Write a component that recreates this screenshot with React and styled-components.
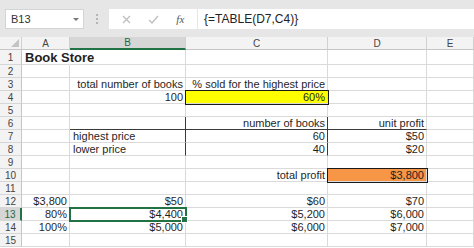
import React from "react"
import styled, { createGlobalStyle, css } from "styled-components"

const GlobalStyle = createGlobalStyle`
  html, body {
    margin: 0;
    padding: 0;
    background: #fff;
  }
  body {
    font-family: "Liberation Sans", Arial, sans-serif;
  }
`

const Window = styled.div`
  width: 474px;
  height: 248px;
  overflow: hidden;
  display: flex;
  flex-direction: column;
  background: #fff;
`

const FormulaArea = styled.div`
  height: 37px;
  box-sizing: border-box;
  padding-top: 9px;
  background: #e6e6e6;
  display: flex;
  align-items: flex-start;
`

const NameBox = styled.div`
  margin-left: 5px;
  width: 79px;
  height: 20px;
  box-sizing: border-box;
  border: 1px solid #d4d4d4;
  background: #fff;
  display: flex;
  align-items: center;
  justify-content: space-between;
  padding: 0 4px 0 5px;
  font-size: 11px;
  color: #333;
`

const Caret = styled.span`
  width: 0;
  height: 0;
  border-left: 3px solid transparent;
  border-right: 3px solid transparent;
  border-top: 3px solid #777;
`

const Grip = styled.div`
  width: 25px;
  height: 20px;
  display: flex;
  flex-direction: column;
  align-items: center;
  justify-content: center;
  gap: 2px;
  span {
    width: 2px;
    height: 2px;
    background: #b5b5b5;
  }
`

const ButtonBox = styled.div`
  width: 88px;
  height: 20px;
  background: #fff;
  display: flex;
  align-items: center;
  justify-content: space-around;
  padding: 0 4px;
  box-sizing: border-box;
  color: #b9b9b9;
`

const Fx = styled.span`
  font-family: "Liberation Serif", serif;
  font-style: italic;
  font-size: 11px;
  color: #555;
`

const FormulaInput = styled.div`
  flex: 1;
  height: 20px;
  margin-left: 1px;
  background: #fff;
  display: flex;
  align-items: center;
  padding-left: 6px;
  font-size: 12px;
  color: #222;
`

const Sheet = styled.div`
  display: grid;
  grid-template-columns: 22px 48px 116px 142px 99px 1fr;
  grid-template-rows: 13px 15px repeat(14, 13px);
`

const Corner = styled.div`
  position: relative;
  background: #f3f3f3;
  border-right: 1px solid #d0d0d0;
  border-bottom: 1px solid #c6c6c6;
  box-sizing: border-box;
  &::after {
    content: "";
    position: absolute;
    right: 2px;
    bottom: 2px;
    border-left: 8px solid transparent;
    border-bottom: 8px solid #c4c4c4;
  }
`

const ColHead = styled.div`
  box-sizing: border-box;
  background: ${p => (p.$active ? "#d6d6d6" : "#f3f3f3")};
  border-right: 1px solid #d0d0d0;
  border-bottom: ${p => (p.$active ? "2px solid #217346" : "1px solid #c6c6c6")};
  color: ${p => (p.$active ? "#1e6b41" : "#444")};
  font-size: 10px;
  display: flex;
  align-items: center;
  justify-content: center;
`

const RowHead = styled.div`
  box-sizing: border-box;
  background: ${p => (p.$active ? "#d6d6d6" : "#f3f3f3")};
  border-right: ${p => (p.$active ? "2px solid #217346" : "1px solid #c6c6c6")};
  border-bottom: 1px solid #d6d6d6;
  color: ${p => (p.$active ? "#1e6b41" : "#444")};
  font-size: 10px;
  display: flex;
  align-items: center;
  justify-content: center;
`

const Cell = styled.div`
  position: relative;
  box-sizing: border-box;
  border-right: 1px solid ${p => (p.$br ? "#3a3a3a" : p.$open ? "transparent" : "#dadada")};
  border-bottom: 1px solid ${p => (p.$bb ? "#3a3a3a" : "#dadada")};
  background: ${p => p.$fill || "transparent"};
  font-size: ${p => (p.$title ? "13px" : "11px")};
  font-weight: ${p => (p.$title ? 700 : 400)};
  color: #1f1f1f;
  white-space: nowrap;
  display: flex;
  align-items: center;
  justify-content: ${p => (p.$align === "right" ? "flex-end" : "flex-start")};
  padding: ${p => (p.$align === "right" ? "0 2px 0 0" : "0 0 0 3px")};
  z-index: ${p => (p.$title || p.$boxed || p.$selected ? 2 : 1)};
  ${p =>
    p.$boxed &&
    css`
      outline: 1px solid #1a1a1a;
    `}
  ${p =>
    p.$selected &&
    css`
      outline: 2px solid #217346;
      outline-offset: -1px;
      &::after {
        content: "";
        position: absolute;
        right: -3px;
        bottom: -3px;
        width: 5px;
        height: 5px;
        background: #217346;
        border: 1px solid #fff;
      }
    `}
`

const R = "right"

const rows = [
  { n: 1, cells: [{ v: "Book Store", title: true, open: true }] },
  { n: 2, cells: [] },
  { n: 3, cells: [{}, { v: "total number of books", align: R }, { v: "% sold for the highest price", align: R }] },
  { n: 4, cells: [{}, { v: "100", align: R }, { v: "60%", align: R, fill: "#ffff00", boxed: true }] },
  { n: 5, cells: [] },
  {
    n: 6,
    cells: [
      {},
      { br: true, bb: true },
      { v: "number of books", align: R, br: true, bb: true },
      { v: "unit profit", align: R, bb: true },
    ],
  },
  {
    n: 7,
    cells: [{}, { v: "highest price", br: true }, { v: "60", align: R, br: true }, { v: "$50", align: R }],
  },
  {
    n: 8,
    cells: [{}, { v: "lower price", br: true }, { v: "40", align: R, br: true }, { v: "$20", align: R }],
  },
  { n: 9, cells: [] },
  {
    n: 10,
    cells: [{}, {}, { v: "total profit", align: R }, { v: "$3,800", align: R, fill: "#f79646", boxed: true }],
  },
  { n: 11, cells: [] },
  {
    n: 12,
    cells: [
      { v: "$3,800", align: R },
      { v: "$50", align: R },
      { v: "$60", align: R },
      { v: "$70", align: R },
    ],
  },
  {
    n: 13,
    cells: [
      { v: "80%", align: R },
      { v: "$4,400", align: R, selected: true },
      { v: "$5,200", align: R },
      { v: "$6,000", align: R },
    ],
  },
  {
    n: 14,
    cells: [
      { v: "100%", align: R },
      { v: "$5,000", align: R },
      { v: "$6,000", align: R },
      { v: "$7,000", align: R },
    ],
  },
  { n: 15, cells: [] },
]

const columns = ["A", "B", "C", "D", "E"]

const CrossIcon = () => (
  <svg width="9" height="9" viewBox="0 0 9 9">
    <path d="M1 1 L8 8 M8 1 L1 8" stroke="#bcbcbc" strokeWidth="1.2" />
  </svg>
)

const CheckIcon = () => (
  <svg width="11" height="9" viewBox="0 0 11 9">
    <path d="M1 5 L4 8 L10 1" stroke="#bcbcbc" strokeWidth="1.2" fill="none" />
  </svg>
)

export default function App() {
  return (
    <Window>
      <GlobalStyle />
      <FormulaArea>
        <NameBox>
          B13
          <Caret />
        </NameBox>
        <Grip>
          <span />
          <span />
          <span />
        </Grip>
        <ButtonBox>
          <CrossIcon />
          <CheckIcon />
          <Fx>fx</Fx>
        </ButtonBox>
        <FormulaInput>{"{=TABLE(D7,C4)}"}</FormulaInput>
      </FormulaArea>
      <Sheet>
        <Corner />
        {columns.map(c => (
          <ColHead key={c} $active={c === "B"}>
            {c}
          </ColHead>
        ))}
        {rows.map(row => (
          <React.Fragment key={row.n}>
            <RowHead $active={row.n === 13}>{row.n}</RowHead>
            {columns.map((c, i) => {
              const cell = row.cells[i] || {}
              return (
                <Cell
                  key={c}
                  $align={cell.align}
                  $title={cell.title}
                  $open={cell.open}
                  $fill={cell.fill}
                  $boxed={cell.boxed}
                  $selected={cell.selected}
                  $br={cell.br}
                  $bb={cell.bb}
                >
                  {cell.v}
                </Cell>
              )
            })}
          </React.Fragment>
        ))}
      </Sheet>
    </Window>
  )
}
